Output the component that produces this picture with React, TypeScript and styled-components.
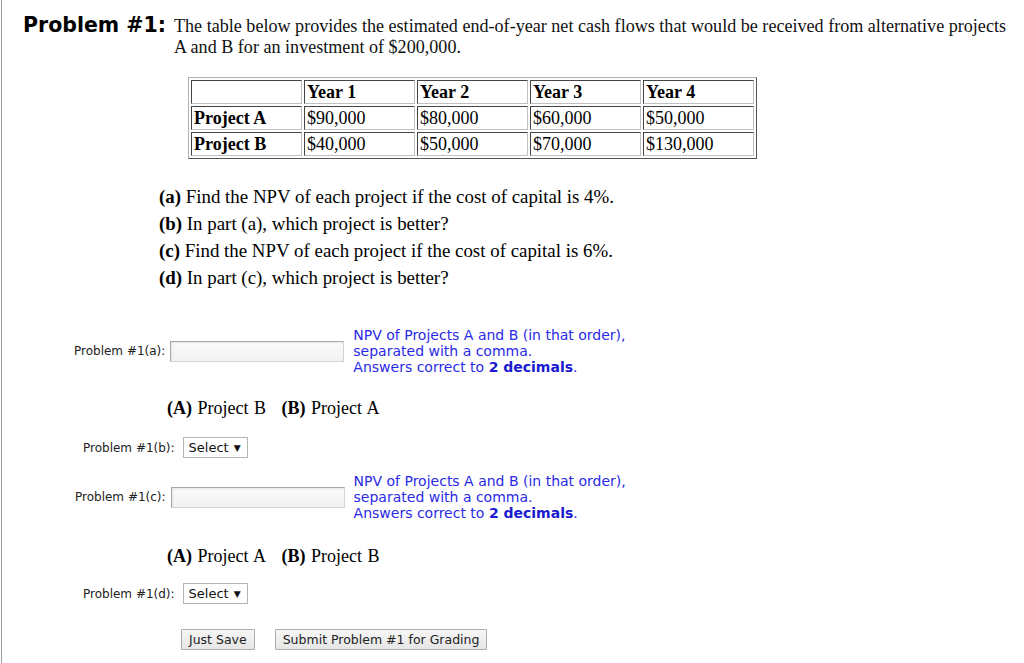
import React from "react";
import styled, { createGlobalStyle } from "styled-components";

const Global = createGlobalStyle`
  html, body { margin: 0; padding: 0; background: #fff; }
  body { font-family: "Liberation Serif", "Times New Roman", serif; color: #000; }
`;

const Page = styled.div`
  margin-left: 1px;
  border-left: 1px solid #9a9a9a;
  min-height: 663px;
  box-sizing: border-box;
  padding-top: 13px;
`;

const Header = styled.div`
  display: flex;
  align-items: baseline;
  padding-left: 21px;
`;

const Title = styled.span`
  font-family: "DejaVu Sans", Verdana, sans-serif;
  font-weight: bold;
  font-size: 20.5px;
  white-space: nowrap;
  width: 151px;
  flex: none;
`;

const Intro = styled.div`
  font-size: 18.1px;
  line-height: 21px;
  color: #111;
`;

const DataTable = styled.table`
  margin: 19px 0 0 186px;
  border-collapse: separate;
  border-spacing: 2px;
  border: 1px solid;
  border-color: #b0b0b0 #555 #555 #b0b0b0;
  table-layout: fixed;
  font-size: 18px;
`;

const Cell = styled.td<{ $bold?: boolean; $w: number }>`
  width: ${(p) => p.$w}px;
  height: 24px;
  padding: 0 2px;
  border: 1px solid;
  border-color: #444 #c0c0c0 #c0c0c0 #444;
  font-weight: ${(p) => (p.$bold ? "bold" : "normal")};
  line-height: 22px;
  box-sizing: border-box;
  white-space: nowrap;
`;

const Questions = styled.ol`
  list-style: none;
  margin: 24px 0 0 157px;
  padding: 0;
  font-size: 18.9px;
  line-height: 27px;
`;

const Q = styled.li``;

const Row = styled.div<{ $top: number; $left: number }>`
  display: flex;
  align-items: center;
  margin-top: ${(p) => p.$top}px;
  padding-left: ${(p) => p.$left}px;
`;

const Label = styled.span<{ $gap: number }>`
  font-family: "DejaVu Sans", Verdana, sans-serif;
  font-size: 12px;
  color: #222;
  margin-right: ${(p) => p.$gap}px;
  white-space: nowrap;
`;

const TextInput = styled.input`
  width: 174px;
  height: 21px;
  box-sizing: border-box;
  border: 1px solid #d4d4d4;
  border-top-color: #a8a8a8;
  border-left-color: #a8a8a8;
  background: linear-gradient(#fafafa, #f2f2f2);
  box-shadow: inset 1px 1px 2px rgba(0, 0, 0, 0.08);
  margin: 0;
  padding: 0 3px;
`;

const Hint = styled.div`
  font-family: "DejaVu Sans", Verdana, sans-serif;
  font-size: 14px;
  line-height: 16px;
  color: #2a2ae6;
  margin-left: 9px;
  strong { color: #1a1ad0; }
`;

const Options = styled.div<{ $top: number }>`
  margin: ${(p) => p.$top}px 0 0 165px;
  font-size: 18px;
  line-height: 27px;
  word-spacing: 1px;
`;

const Opt = styled.span`
  margin-right: 10px;
`;

const SelectBox = styled.button`
  font-family: "DejaVu Sans", Verdana, sans-serif;
  font-size: 13px;
  color: #111;
  height: 21px;
  box-sizing: border-box;
  padding: 0 6px 0 5px;
  background: #fff;
  border: 1px solid #b4b4b4;
  margin: 0;
  display: inline-flex;
  align-items: center;
  gap: 5px;
  span { font-size: 9px; }
`;

const Buttons = styled.div`
  display: flex;
  gap: 20px;
  margin: 25px 0 0 179px;
`;

const Btn = styled.button`
  font-family: "DejaVu Sans", Verdana, sans-serif;
  font-size: 12.5px;
  color: #222;
  height: 21px;
  box-sizing: border-box;
  padding: 0 7px;
  margin: 0;
  background: linear-gradient(#f6f6f6, #e6e6e6);
  border: 1px solid #adadad;
  border-radius: 1px;
`;

const years = ["Year 1", "Year 2", "Year 3", "Year 4"];
const rows = [
  { name: "Project A", vals: ["$90,000", "$80,000", "$60,000", "$50,000"] },
  { name: "Project B", vals: ["$40,000", "$50,000", "$70,000", "$130,000"] },
];

const Hints = () => (
  <Hint>
    NPV of Projects A and B (in that order),
    <br />
    separated with a comma.
    <br />
    Answers correct to <strong>2 decimals</strong>.
  </Hint>
);

export default function App() {
  return (
    <>
      <Global />
      <Page>
        <Header>
          <Title>Problem #1:</Title>
          <Intro>
            The table below provides the estimated end-of-year net cash flows that would be received from alternative projects
            <br />
            A and B for an investment of $200,000.
          </Intro>
        </Header>

        <DataTable>
          <tbody>
            <tr>
              <Cell $w={111}></Cell>
              {years.map((y) => (
                <Cell key={y} $w={111} $bold>
                  {y}
                </Cell>
              ))}
            </tr>
            {rows.map((r) => (
              <tr key={r.name}>
                <Cell $w={111} $bold>
                  {r.name}
                </Cell>
                {r.vals.map((v, i) => (
                  <Cell key={i} $w={111}>
                    {v}
                  </Cell>
                ))}
              </tr>
            ))}
          </tbody>
        </DataTable>

        <Questions>
          <Q><b>(a)</b> Find the NPV of each project if the cost of capital is 4%.</Q>
          <Q><b>(b)</b> In part (a), which project is better?</Q>
          <Q><b>(c)</b> Find the NPV of each project if the cost of capital is 6%.</Q>
          <Q><b>(d)</b> In part (c), which project is better?</Q>
        </Questions>

        <Row $top={36} $left={72}>
          <Label $gap={5}>Problem #1(a):</Label>
          <TextInput type="text" />
          <Hints />
        </Row>

        <Options $top={20}>
          <Opt><b>(A)</b> Project B</Opt> <Opt><b>(B)</b> Project A</Opt>
        </Options>

        <Row $top={15} $left={81}>
          <Label $gap={8}>Problem #1(b):</Label>
          <SelectBox>Select <span>▼</span></SelectBox>
        </Row>

        <Row $top={15} $left={73}>
          <Label $gap={5}>Problem #1(c):</Label>
          <TextInput type="text" />
          <Hints />
        </Row>

        <Options $top={22}>
          <Opt><b>(A)</b> Project A</Opt> <Opt><b>(B)</b> Project B</Opt>
        </Options>

        <Row $top={13} $left={81}>
          <Label $gap={8}>Problem #1(d):</Label>
          <SelectBox>Select <span>▼</span></SelectBox>
        </Row>

        <Buttons>
          <Btn>Just Save</Btn>
          <Btn>Submit Problem #1 for Grading</Btn>
        </Buttons>
      </Page>
    </>
  );
}
